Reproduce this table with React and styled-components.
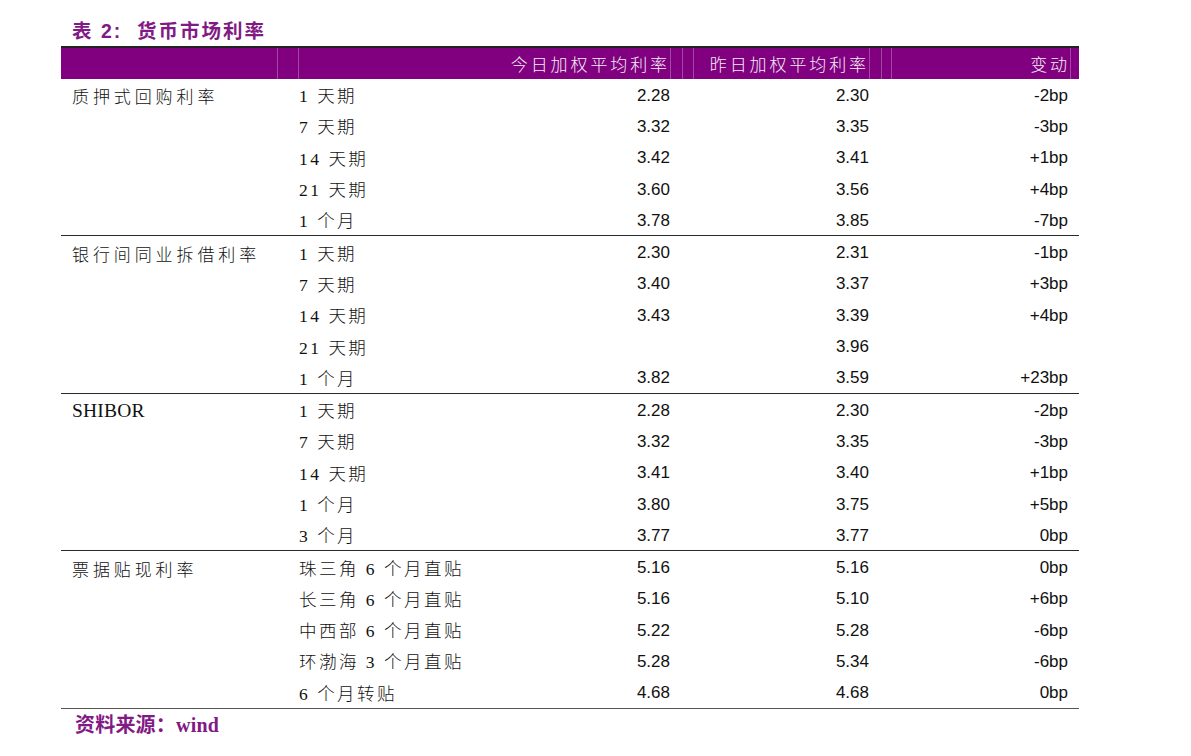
import React from "react";
import styled, { createGlobalStyle } from "styled-components";

const Global = createGlobalStyle`
  html, body { margin: 0; padding: 0; background: #fff; }
  body { font-family: "Liberation Serif", "Noto Sans CJK SC", serif; color: #111; }
`;

const Page = styled.div`
  width: 1191px;
  height: 756px;
  padding-left: 61px;
  box-sizing: border-box;
`;

const Title = styled.div`
  height: 46px;
  box-sizing: border-box;
  padding: 18px 0 0 11px;
  font-family: "Liberation Sans", "Noto Sans CJK SC", sans-serif;
  font-weight: 700;
  font-size: 19.5px;
  line-height: 26px;
  letter-spacing: 2px;
  color: #821a86;
  white-space: pre;
`;

const Table = styled.div`
  width: 1018px;
  border-top: 2px solid #222;
`;

const HeaderRow = styled.div`
  display: grid;
  grid-template-columns: 216px 21px 372px 12px 11px 176px 12px 10px 179px 9px;
  height: 31px;
  background: #800080;
`;

const HeaderCell = styled.div`
  border-left: ${(p) => (p.$first ? "none" : "1px solid #a446a4")};
  display: flex;
  align-items: center;
  justify-content: flex-end;
  color: #f4eef4;
  font-family: "Noto Sans CJK SC", sans-serif;
  font-weight: 300;
  font-size: 17px;
  letter-spacing: 2.9px;
  overflow: hidden;
  white-space: nowrap;
`;

const Group = styled.div`
  border-bottom: 1.5px solid ${(p) => (p.$last ? "#555" : "#2a2a2a")};
`;

const Row = styled.div`
  display: grid;
  grid-template-columns: 226px 200px 195px 199px 198px;
  height: 31.3px;
  align-items: center;
  padding-top: 2px;
  box-sizing: border-box;
`;

const Label = styled.div`
  padding-left: 11px;
  font-family: ${(p) =>
    p.$latin ? `"Liberation Serif", serif` : `"Noto Sans CJK SC", serif`};
  font-size: ${(p) => (p.$latin ? "19.5px" : "17px")};
  font-weight: 300;
  letter-spacing: ${(p) => (p.$latin ? "0.2px" : "3.9px")};
  white-space: nowrap;
`;

const Term = styled.div`
  padding-left: 12px;
  font-family: "Liberation Serif", "Noto Sans CJK SC", serif;
  font-size: 17.5px;
  font-weight: 300;
  letter-spacing: 2.5px;
  white-space: nowrap;
  margin-top: -2px;
`;

const Num = styled.div`
  text-align: right;
  padding-right: ${(p) => p.$pad || 12}px;
  font-family: "Liberation Sans", sans-serif;
  font-size: 17px;
  color: #111;
`;

const Footer = styled.div`
  padding: 5px 0 0 14px;
  font-family: "Liberation Serif", "Noto Sans CJK SC", serif;
  font-weight: 700;
  font-size: 20px;
  line-height: 22px;
  color: #821a86;
  letter-spacing: 0.2px;
`;

const groups = [
  {
    label: "质押式回购利率",
    rows: [
      ["1 天期", "2.28", "2.30", "-2bp"],
      ["7 天期", "3.32", "3.35", "-3bp"],
      ["14 天期", "3.42", "3.41", "+1bp"],
      ["21 天期", "3.60", "3.56", "+4bp"],
      ["1 个月", "3.78", "3.85", "-7bp"],
    ],
  },
  {
    label: "银行间同业拆借利率",
    rows: [
      ["1 天期", "2.30", "2.31", "-1bp"],
      ["7 天期", "3.40", "3.37", "+3bp"],
      ["14 天期", "3.43", "3.39", "+4bp"],
      ["21 天期", "", "3.96", ""],
      ["1 个月", "3.82", "3.59", "+23bp"],
    ],
  },
  {
    label: "SHIBOR",
    latin: true,
    rows: [
      ["1 天期", "2.28", "2.30", "-2bp"],
      ["7 天期", "3.32", "3.35", "-3bp"],
      ["14 天期", "3.41", "3.40", "+1bp"],
      ["1 个月", "3.80", "3.75", "+5bp"],
      ["3 个月", "3.77", "3.77", "0bp"],
    ],
  },
  {
    label: "票据贴现利率",
    rows: [
      ["珠三角 6 个月直贴", "5.16", "5.16", "0bp"],
      ["长三角 6 个月直贴", "5.16", "5.10", "+6bp"],
      ["中西部 6 个月直贴", "5.22", "5.28", "-6bp"],
      ["环渤海 3 个月直贴", "5.28", "5.34", "-6bp"],
      ["6 个月转贴", "4.68", "4.68", "0bp"],
    ],
  },
];

export default function App() {
  return (
    <Page>
      <Global />
      <Title>表 2:  货币市场利率</Title>
      <Table>
        <HeaderRow>
          <HeaderCell $first />
          <HeaderCell />
          <HeaderCell>今日加权平均利率</HeaderCell>
          <HeaderCell />
          <HeaderCell />
          <HeaderCell>昨日加权平均利率</HeaderCell>
          <HeaderCell />
          <HeaderCell />
          <HeaderCell>变动</HeaderCell>
          <HeaderCell />
        </HeaderRow>
        {groups.map((g, gi) => (
          <Group key={g.label} $last={gi === groups.length - 1}>
            {g.rows.map((r, i) => (
              <Row key={i}>
                <Label $latin={g.latin}>{i === 0 ? g.label : ""}</Label>
                <Term>{r[0]}</Term>
                <Num>{r[1]}</Num>
                <Num>{r[2]}</Num>
                <Num $pad={11}>{r[3]}</Num>
              </Row>
            ))}
          </Group>
        ))}
      </Table>
      <Footer>资料来源：wind</Footer>
    </Page>
  );
}
